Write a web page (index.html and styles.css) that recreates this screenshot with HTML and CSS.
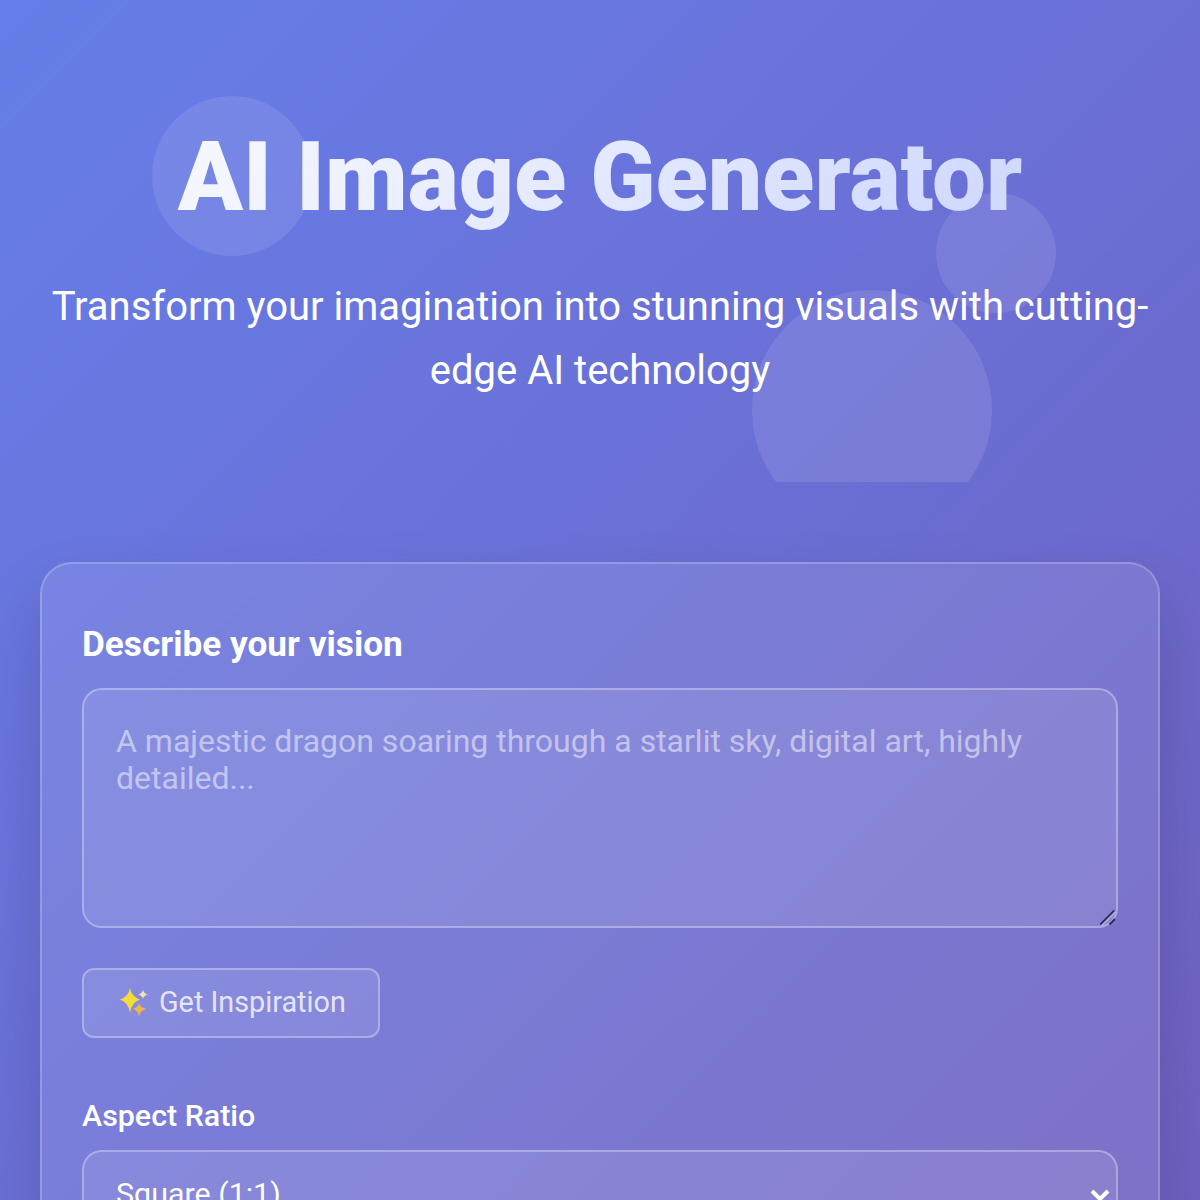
FILE: index.html
```html
<!DOCTYPE html>
<html lang="en">
<head>
    <meta charset="UTF-8">
    <meta name="viewport" content="width=device-width, initial-scale=1.0">
    <title>AI Image Generator</title>
    <link rel="stylesheet" href="styles.css">
</head>
<body>
    <div class="container">
        <header class="header">
            <div class="shape shape-one"></div>
            <div class="shape shape-two"></div>
            <div class="shape shape-three"></div>
            <h1 class="title">AI Image Generator</h1>
            <p class="subtitle">Transform your imagination into stunning visuals with cutting-edge AI technology</p>
        </header>

        <!-- generator form -->
        <main class="card">
            <label class="prompt-label" for="prompt">Describe your vision</label>
            <div class="prompt-wrap">
                <textarea id="prompt" class="prompt-input" placeholder="A majestic dragon soaring through a starlit sky, digital art, highly detailed..."></textarea>
                <svg class="resize-grip" width="20" height="20" viewBox="0 0 20 20" fill="none" stroke-width="1.8" aria-hidden="true">
                    <path d="M3.4 17.5 L17.4 3.5" stroke="#2b2b58"/>
                    <path d="M12.4 17.5 L18 12" stroke="#2b2b58"/>
                    <path d="M4.6 18.7 L18.6 4.7" stroke="rgba(255,255,255,0.35)"/>
                </svg>
            </div>

            <button class="inspire-button" type="button">
                <svg class="sparkle" width="36" height="36" viewBox="0 0 36 36" aria-hidden="true">
                    <path d="M14 3.5 Q15 12.5 24 15.5 Q15.5 18.5 14 28.5 Q12.5 18.5 4 15.5 Q13 12.5 14 3.5 Z" fill="#f4dc3a"/>
                    <path d="M23 18.5 Q23.6 23 30 25 Q23.6 27 23 33 Q22.4 27 17 25 Q22.4 23 23 18.5 Z" fill="#e8b64a"/>
                    <path d="M27 5.5 Q27.4 9 31.5 10.5 Q27.4 12 27 15 Q26.6 12 22.5 10.5 Q26.6 9 27 5.5 Z" fill="#efe6b4"/>
                </svg>
                <span>Get Inspiration</span>
            </button>

            <label class="field-label" for="ratio">Aspect Ratio</label>
            <div class="select-wrap">
                <select id="ratio" class="field-select">
                    <option>Square (1:1)</option>
                    <option>Landscape (16:9)</option>
                    <option>Portrait (9:16)</option>
                </select>
                <svg class="select-arrow" width="20" height="12" viewBox="0 0 20 12" fill="none" stroke="white" stroke-width="4" aria-hidden="true">
                    <path d="M2 2 L10 10 L18 2"/>
                </svg>
            </div>

            <label class="field-label" for="style">Style</label>
            <div class="select-wrap">
                <select id="style" class="field-select">
                    <option>Digital Art</option>
                    <option>Photorealistic</option>
                    <option>Watercolor</option>
                </select>
                <svg class="select-arrow" width="20" height="12" viewBox="0 0 20 12" fill="none" stroke="white" stroke-width="4" aria-hidden="true">
                    <path d="M2 2 L10 10 L18 2"/>
                </svg>
            </div>

            <button class="generate-button" type="button">Generate Image</button>
        </main>
    </div>
</body>
</html>
```

FILE: styles.css
```css
* {
    box-sizing: border-box;
    margin: 0;
    padding: 0;
}

body {
    min-height: 3000px;
    background: linear-gradient(135deg, #667eea 0%, #764ba2 100%);
    color: white;
    font-family: Roboto, "Liberation Sans", sans-serif;
    line-height: 1.6;
}

.container {
    padding: 21px 40px 20px;
}

.header {
    position: relative;
    overflow: hidden;
    padding: 80px 0 79px;
    margin-bottom: 80px;
    text-align: center;
}

.shape {
    position: absolute;
    border-radius: 50%;
    background: rgba(255, 255, 255, 0.1);
}

.shape-one {
    top: 75px;
    left: 112px;
    width: 160px;
    height: 160px;
}

.shape-two {
    top: 172px;
    left: 896px;
    width: 120px;
    height: 120px;
}

.shape-three {
    top: 269px;
    left: 712px;
    width: 240px;
    height: 240px;
}

.title {
    position: relative;
    margin-bottom: 20px;
    font-size: 96px;
    font-weight: 900;
    background: linear-gradient(135deg, #ffffff 0%, #c7d2fe 100%);
    -webkit-background-clip: text;
    background-clip: text;
    color: transparent;
}

.subtitle {
    position: relative;
    font-size: 40px;
    font-weight: 400;
}

.card {
    display: flex;
    flex-direction: column;
    align-items: flex-start;
    padding: 52px 40px 56px;
    background: rgba(255, 255, 255, 0.1);
    border: 2px solid rgba(255, 255, 255, 0.2);
    border-radius: 32px;
    box-shadow: 0 32px 64px rgba(0, 0, 0, 0.15);
}

.prompt-label {
    margin-bottom: 15.7px;
    font-size: 35.2px;
    font-weight: 700;
}

.prompt-wrap {
    position: relative;
    width: 100%;
    margin-bottom: 40px;
}

.prompt-input {
    display: block;
    width: 100%;
    height: 240px;
    padding: 33px 32px 32px;
    background: rgba(255, 255, 255, 0.1);
    border: 2px solid rgba(255, 255, 255, 0.3);
    border-radius: 20px;
    color: white;
    font-family: inherit;
    font-size: 32px;
    line-height: 37px;
    resize: none;
}

.prompt-input::placeholder {
    color: rgba(255, 255, 255, 0.5);
}

.resize-grip {
    position: absolute;
    right: 1px;
    bottom: 1px;
    pointer-events: none;
}

.inspire-button {
    display: flex;
    align-items: center;
    gap: 7px;
    padding: 14px 32px 16px;
    margin-bottom: 54.7px;
    background: rgba(255, 255, 255, 0.1);
    border: 2px solid rgba(255, 255, 255, 0.3);
    border-radius: 12px;
    color: rgba(255, 255, 255, 0.8);
    font-family: inherit;
    font-size: 28.8px;
}

.field-label {
    margin-bottom: 8.7px;
    font-size: 30.4px;
    font-weight: 500;
}

.select-wrap {
    position: relative;
    width: 100%;
    margin-bottom: 40px;
}

.field-select {
    display: block;
    width: 100%;
    padding: 24px 32px;
    background: rgba(255, 255, 255, 0.1);
    border: 2px solid rgba(255, 255, 255, 0.3);
    border-radius: 20px;
    color: white;
    font-family: inherit;
    font-size: 30.4px;
    appearance: none;
}

.select-arrow {
    position: absolute;
    top: 39px;
    right: 8px;
    pointer-events: none;
}

.generate-button {
    width: 100%;
    padding: 32px;
    background: rgba(255, 255, 255, 0.2);
    border: none;
    border-radius: 20px;
    color: white;
    font-family: inherit;
    font-size: 32px;
    font-weight: 700;
}
```
